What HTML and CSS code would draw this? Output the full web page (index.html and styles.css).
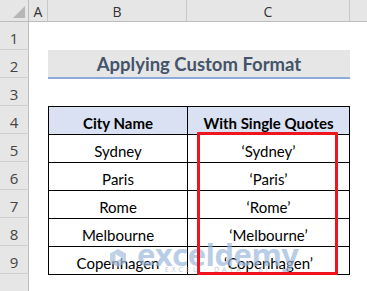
FILE: index.html
```html
<!DOCTYPE html>
<html>
<head>
<meta charset="utf-8">
<link rel="stylesheet" href="styles.css">
</head>
<body>
<div class="sheet">
  <div class="corner"><span class="tri"></span></div>
  <div class="colhead">A</div>
  <div class="colhead">B</div>
  <div class="colhead">C</div>
  <div class="colhead last"></div>

  <div class="rowhead r1">1</div>
  <div class="rowhead r2">2</div>
  <div class="rowhead r3">3</div>
  <div class="rowhead r4">4</div>
  <div class="rowhead r5">5</div>
  <div class="rowhead r6">6</div>
  <div class="rowhead r7">7</div>
  <div class="rowhead r8">8</div>
  <div class="rowhead r9">9</div>
  <div class="rowhead r10"></div>

  <div class="title">Applying Custom Format</div>

  <div class="tablewrap">
    <table class="data">
      <tr><th>City Name</th><th>With Single Quotes</th></tr>
      <tr><td>Sydney</td><td>‘Sydney’</td></tr>
      <tr><td>Paris</td><td>‘Paris’</td></tr>
      <tr><td>Rome</td><td>‘Rome’</td></tr>
      <tr><td>Melbourne</td><td>‘Melbourne’</td></tr>
      <tr><td>Copenhagen</td><td>‘Copenhagen’</td></tr>
    </table>
    <div class="watermark">
      <svg class="wm-icon" width="18" height="20" viewBox="0 0 18 20">
        <path d="M9 1 L17 5.5 L17 14.5 L9 19 L1 14.5 L1 5.5 Z" fill="#a7bedc"/>
        <path d="M6.5 6 L12.5 10 L6.5 14 Z" fill="#ffffff"/>
      </svg>
      <div class="wm-text">
        <span class="wm-name">exceldemy</span>
        <span class="wm-sub">EXCEL · DATA · BI</span>
      </div>
    </div>
    <div class="highlight"></div>
  </div>
</div>
</body>
</html>
```
FILE: styles.css
```css
html, body {
  margin: 0;
  padding: 0;
  background: #ffffff;
}
.sheet {
  display: grid;
  grid-template-columns: 29px 19px 139px 163px 17px;
  grid-template-rows: 22px repeat(10, 28px);
  width: 367px;
  height: 291px;
  font-family: Lato, "Open Sans", sans-serif;
  position: relative;
  overflow: hidden;
}
.corner {
  background: #e6e6e6;
  border-right: 1px solid #bdbdbd;
  border-bottom: 1px solid #bdbdbd;
  position: relative;
}
.tri {
  position: absolute;
  right: 3px;
  bottom: 3px;
  width: 0;
  height: 0;
  border-left: 12px solid transparent;
  border-bottom: 12px solid #b6b6b6;
}
.colhead {
  background: #e6e6e6;
  border-right: 1px solid #c8c8c8;
  border-bottom: 1px solid #bdbdbd;
  display: flex;
  align-items: center;
  justify-content: center;
  font-family: "Open Sans", sans-serif;
  font-size: 14px;
  color: #333333;
  padding-top: 1px;
}
.colhead.last { border-right: none; }
.rowhead {
  grid-column: 1;
  background: #e6e6e6;
  border-right: 1px solid #bdbdbd;
  border-bottom: 1px solid #cfcfcf;
  display: flex;
  align-items: center;
  justify-content: center;
  font-family: "Open Sans", sans-serif;
  font-size: 15px;
  color: #444444;
  padding-top: 4px;
  box-sizing: border-box;
}
.title {
  grid-column: 3 / 5;
  grid-row: 3;
  background: #e7e6e6;
  border-bottom: 2px solid #8eaadb;
  display: flex;
  align-items: flex-end;
  justify-content: center;
  font-weight: 700;
  font-size: 18.5px;
  color: #44546a;
  padding-bottom: 2px;
  box-sizing: border-box;
  height: 29px;
}
.tablewrap {
  grid-column: 3 / 5;
  grid-row: 5 / 11;
  position: relative;
}
.data {
  border-collapse: collapse;
  width: 302px;
  table-layout: fixed;
}
.data th, .data td {
  border: 1px solid #000000;
  height: 27px;
  padding: 0;
  text-align: center;
  vertical-align: bottom;
  font-size: 15px;
  color: #000000;
  line-height: 22px;
}
.data th:first-child, .data td:first-child { width: 138px; }
.data th {
  background: #d9e1f2;
  font-weight: 700;
}
.highlight {
  position: absolute;
  left: 149px;
  top: 26px;
  width: 135px;
  height: 137px;
  border: 3px solid #f0141e;
  border-radius: 1px;
}
.watermark {
  position: absolute;
  left: 61px;
  top: 136px;
  display: flex;
  align-items: center;
  gap: 10px;
  opacity: 0.7;
  pointer-events: none;
}
.wm-text {
  display: flex;
  flex-direction: column;
  align-items: center;
  line-height: 1;
}
.wm-name {
  font-family: "Open Sans", sans-serif;
  font-weight: 700;
  font-size: 31px;
  color: #9db8dc;
  letter-spacing: -0.5px;
  line-height: 24px;
}
.wm-sub {
  font-family: "Open Sans", sans-serif;
  font-size: 7px;
  color: #a4b0be;
  letter-spacing: 3px;
  margin-top: 0;
}
```
